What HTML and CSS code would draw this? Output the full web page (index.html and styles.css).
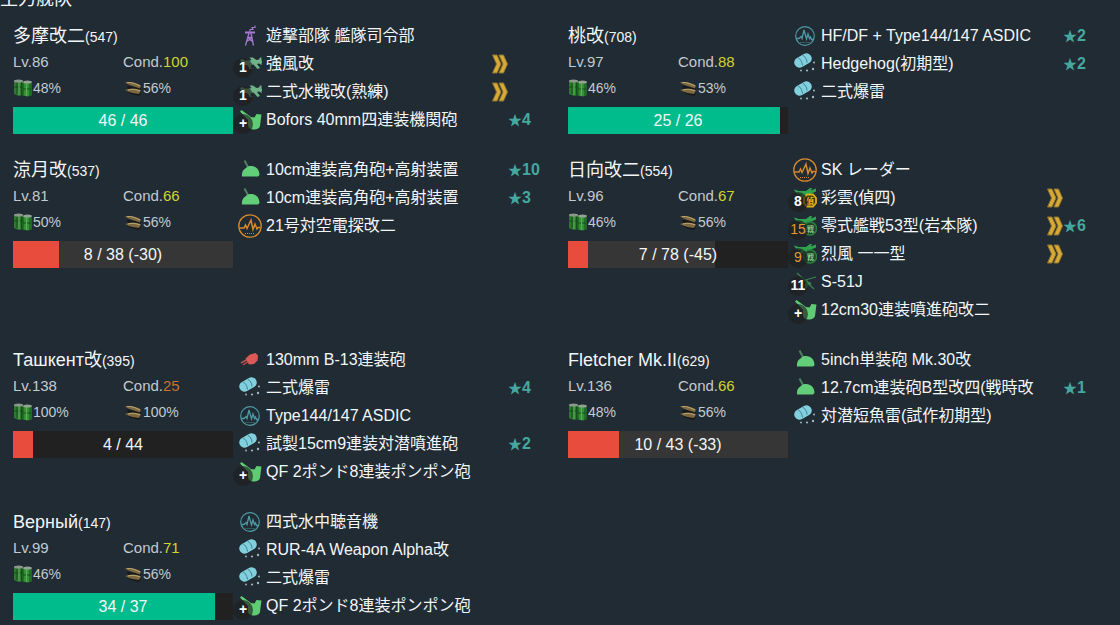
FILE: index.html
```
<!DOCTYPE html>
<html lang="ja">
  <head>
    <meta charset="utf-8" />
    <title>主力舰队</title>
    <meta name="viewport" content="width=device-width,initial-scale=1" />
    <link rel="stylesheet" href="styles.css">
  </head>

  <body>
    <!-- Icon sprite -->
    <svg class="sprite" aria-hidden="true">
      <symbol id="command" viewBox="0 0 24 24">
        <g fill="none" stroke="#a678cf" stroke-width="1.3">
          <path d="M11 9 7.500 21.500M13 9 15.500 21.500M8.500 17.500l6-3.500M9.500 13.500l5.500 4.500M9.500 13.500h4.500"/>
          <path d="M7 8.500h10" stroke-width="2"/>
          <path d="M12 9V5.500l3 0 -1-2 3 0 0-2" stroke-width="1.100"/>
        </g>
      </symbol>
      <symbol id="seaplane" viewBox="0 0 24 24">
        <path fill="#6fb287" d="M2 8l2.500-1 2 1.500 5.500 0 1.500-.5-2-2.500 3.500 0 3.500 2.500 2.500-.5 1-2 1.500 0 0 3 1.500 1.500-1.500 1 .5 2-3-1.500-2 .5 3 4-2.500 1-4-4.500-2 .5-1 2.500 2.500 1-3.500 .5-1.500-3.500-5.500-1z"/>
      </symbol>
      <symbol id="aagun" viewBox="0 0 24 24">
        <path fill="#5fcb74" d="M2 3.500l1.500-1.500L13 9l3.500 .5 2-3.500 5 .5-.5 3.500-1 8c-.5 2-3 3.500-5.500 3.500-4 0-6.500-1.500-6.500-4.500v-5z"/>
      </symbol>
      <symbol id="depth" viewBox="0 0 24 24">
        <path stroke="#82d0de" stroke-width="10.500" stroke-linecap="round" d="M6.500 10.500 13.500 6.500"/>
        <path fill="none" stroke="#35798a" stroke-width=".9" d="M9.500 3c2.500 1.500 4.500 4 4.500 7.500M4 5.500c2.500 .5 5 3.500 5.500 8"/>
        <g fill="#9fb9c0">
          <circle cx="21" cy="10.500" r="1"/>
          <circle cx="20" cy="17" r="1.200"/>
          <circle cx="14" cy="18.500" r="1.100"/>
          <circle cx="8" cy="18.500" r=".9"/>
        </g>
      </symbol>
      <symbol id="sonar" viewBox="0 0 24 24">
        <g fill="none" stroke="#4e9aa4">
          <circle cx="12" cy="12" r="9.300" stroke-width="1.200"/>
          <path stroke-width="1.300" d="M3.500 14.500H6l2-2 1 2 2-8.500 2.500 9 1.500-5 1.500 4.500 1-1.500 1 2.500h2"/>
          <path stroke-width=".8" stroke-dasharray="1 1" d="M7.500 18.500h9"/>
        </g>
      </symbol>
      <symbol id="radar" viewBox="0 0 24 24">
        <g fill="none" stroke="#d58a2c">
          <circle cx="12" cy="12" r="11.200" stroke-width="1.300"/>
          <path stroke-width="1.500" d="M1.500 14H6l1.500-3L9 14.500l4-8.500 2 9.500 2-5.500 2 5 1-1.500h2.500"/>
          <path stroke-width="1" stroke-dasharray="1 1" d="M7 19.500h10"/>
        </g>
      </symbol>
      <symbol id="highangle" viewBox="0 0 24 24">
        <path stroke="#4c8060" stroke-width="2" d="M6.500 2.500 10.500 10"/>
        <path fill="#63ce79" d="M4 18.500c-.5-4 1-7 4-8.500 1-1.500 3-2 5-2 5 0 8.500 3.500 8.500 9l-1.500 1.500z"/>
      </symbol>
      <symbol id="maingun" viewBox="0 0 24 24">
        <path stroke="#b9524f" stroke-width="1.500" d="M3 15l7-4M5 17l6-4"/>
        <path fill="#db5a57" d="M7.500 10.500 12 6.500l5.500-1.500 2.500 2.500-.5 5-3.500 3.500-5 .5z"/>
      </symbol>
      <symbol id="plane" viewBox="0 0 24 24">
        <path fill="#2fa350" d="M1 3.500l5 1.500 7 0 4-3 2 0-1 2.500 5-2 0 3-8 3.500-3 0-3 2.500-2 0 1-3-5-1.500z"/>
      </symbol>
      <symbol id="recon" viewBox="0 0 24 24">
        <use href="#plane"/>
        <path fill="#3b3510" stroke="#e0ae17" stroke-width="1.800" d="M14 8.500h6l3 3.500v5l-3 3.500h-6L11 17v-5z"/>
        <text class="glyph" x="17" y="17.500" fill="#f0bd20">偵</text>
      </symbol>
      <symbol id="fighter" viewBox="0 0 24 24">
        <use href="#plane"/>
        <circle cx="17" cy="14.500" r="6.500" fill="#1d4229" stroke="#28803f" stroke-width="1.500"/>
        <text class="glyph" x="17" y="17.500" fill="#7fc48f">戦</text>
      </symbol>
      <symbol id="heli" viewBox="0 0 24 24">
        <g fill="none" stroke="#3c8350">
          <path stroke-width="1.200" d="M4 3 21 19M9 11 23 7"/>
          <path stroke-width="2.500" d="M12 10l3 3 3 1M14 12l-1 6"/>
        </g>
      </symbol>
      <symbol id="chevron" viewBox="0 0 16 20">
        <path fill="#d8aa35" stroke="#8d742f" stroke-width="1" d="M.5 1h4.500l4 9-4 9H.5l4-9zM7 1h4.500l4 9-4 9H7l4-9z"/>
      </symbol>
      <symbol id="fuel" viewBox="0 0 20 20">
        <path fill="#2b7a2d" d="M1 3h9v14l-4 1-5-2z"/>
        <path fill="#2f9131" d="M10 4h8.500v13.500l-4 1-4.500-1z"/>
        <path stroke="#135019" stroke-width="1" d="M4 4v12M8.500 4v13M10 5v12M17 5v13M1 9h9M10 11h8"/>
        <path stroke="#62a860" stroke-width="1.200" d="M6 4v13M13.500 5v13"/>
        <ellipse cx="5.500" cy="3" rx="4.500" ry="1.500" fill="#8a998b"/>
        <ellipse cx="14.500" cy="4" rx="4.300" ry="1.500" fill="#94a395"/>
      </symbol>
      <symbol id="ammo" viewBox="0 0 20 20">
        <path fill="#15191a" d="M4 8l14 1v3L6 13zM4 13l14 2-2 3-8-2z"/>
        <path fill="#7d6840" d="M1.500 4.500C7 3 13 4.500 18 7.500l-1 3C12 8.500 7 7.500 1.500 4.500zM2 12c5-2 11-1.500 16 0l-2 4c-4-.5-9-1-14-4z"/>
        <path fill="none" stroke="#bda873" stroke-width="1" d="M4 4.500c5-.5 9 1.500 13 3.500M5 12c5-1.500 8-.5 12 1"/>
      </symbol>
    </svg>

    <header class="fleet-title">主力舰队</header>

    <main class="fleet">
      <section class="ship">
        <div class="info">
          <div class="name">多摩改二<small>(547)</small></div>
          <div class="stats"><span>Lv.86</span><span>Cond.<b class="cond">100</b></span></div>
          <div class="supply">
            <span><svg><use href="#fuel"/></svg>48%</span>
            <span><svg><use href="#ammo"/></svg>56%</span>
          </div>
          <div class="hp"><div class="hp-now" style="width: 100%"></div><span>46 / 46</span></div>
        </div>
        <ul class="items">
          <li><span class="icon"><svg><use href="#command"/></svg></span><span class="item-name">遊撃部隊 艦隊司令部</span></li>
          <li><span class="icon"><svg><use href="#seaplane"/></svg><i>1</i></span><span class="item-name">強風改</span><svg class="rank"><use href="#chevron"/></svg><span class="level"></span></li>
          <li><span class="icon"><svg><use href="#seaplane"/></svg><i>1</i></span><span class="item-name">二式水戦改(熟練)</span><svg class="rank"><use href="#chevron"/></svg><span class="level"></span></li>
          <li><span class="icon"><svg><use href="#aagun"/></svg><i>+</i></span><span class="item-name">Bofors 40mm四連装機関砲</span><span class="level"><i>★</i>4</span></li>
        </ul>
      </section>

      <section class="ship">
        <div class="info">
          <div class="name">桃改<small>(708)</small></div>
          <div class="stats"><span>Lv.97</span><span>Cond.<b class="cond">88</b></span></div>
          <div class="supply">
            <span><svg><use href="#fuel"/></svg>46%</span>
            <span><svg><use href="#ammo"/></svg>53%</span>
          </div>
          <div class="hp"><div class="hp-now" style="width: 96.15%"></div><span>25 / 26</span></div>
        </div>
        <ul class="items">
          <li><span class="icon"><svg><use href="#sonar"/></svg></span><span class="item-name">HF/DF + Type144/147 ASDIC</span><span class="level"><i>★</i>2</span></li>
          <li><span class="icon"><svg><use href="#depth"/></svg></span><span class="item-name">Hedgehog(初期型)</span><span class="level"><i>★</i>2</span></li>
          <li><span class="icon"><svg><use href="#depth"/></svg></span><span class="item-name">二式爆雷</span></li>
        </ul>
      </section>

      <section class="ship">
        <div class="info">
          <div class="name">涼月改<small>(537)</small></div>
          <div class="stats"><span>Lv.81</span><span>Cond.<b class="cond">66</b></span></div>
          <div class="supply">
            <span><svg><use href="#fuel"/></svg>50%</span>
            <span><svg><use href="#ammo"/></svg>56%</span>
          </div>
          <div class="hp"><div class="hp-lost" style="width: 100%"></div><div class="hp-now danger" style="width: 21.05%"></div><span>8 / 38 (-30)</span></div>
        </div>
        <ul class="items">
          <li><span class="icon"><svg><use href="#highangle"/></svg></span><span class="item-name">10cm連装高角砲+高射装置</span><span class="level"><i>★</i>10</span></li>
          <li><span class="icon"><svg><use href="#highangle"/></svg></span><span class="item-name">10cm連装高角砲+高射装置</span><span class="level"><i>★</i>3</span></li>
          <li><span class="icon"><svg><use href="#radar"/></svg></span><span class="item-name">21号対空電探改二</span></li>
        </ul>
      </section>

      <section class="ship">
        <div class="info">
          <div class="name">日向改二<small>(554)</small></div>
          <div class="stats"><span>Lv.96</span><span>Cond.<b class="cond">67</b></span></div>
          <div class="supply">
            <span><svg><use href="#fuel"/></svg>46%</span>
            <span><svg><use href="#ammo"/></svg>56%</span>
          </div>
          <div class="hp"><div class="hp-lost" style="width: 66.67%"></div><div class="hp-now danger" style="width: 8.97%"></div><span>7 / 78 (-45)</span></div>
        </div>
        <ul class="items">
          <li><span class="icon"><svg><use href="#radar"/></svg></span><span class="item-name">SK レーダー</span></li>
          <li><span class="icon"><svg><use href="#recon"/></svg><i>8</i></span><span class="item-name">彩雲(偵四)</span><svg class="rank"><use href="#chevron"/></svg><span class="level"></span></li>
          <li><span class="icon"><svg><use href="#fighter"/></svg><i class="low">15</i></span><span class="item-name">零式艦戦53型(岩本隊)</span><svg class="rank"><use href="#chevron"/></svg><span class="level"><i>★</i>6</span></li>
          <li><span class="icon"><svg><use href="#fighter"/></svg><i class="low">9</i></span><span class="item-name">烈風 一一型</span><svg class="rank"><use href="#chevron"/></svg><span class="level"></span></li>
          <li><span class="icon"><svg><use href="#heli"/></svg><i>11</i></span><span class="item-name">S-51J</span></li>
          <li><span class="icon"><svg><use href="#aagun"/></svg><i>+</i></span><span class="item-name">12cm30連装噴進砲改二</span></li>
        </ul>
      </section>

      <section class="ship">
        <div class="info">
          <div class="name">Ташкент改<small>(395)</small></div>
          <div class="stats"><span>Lv.138</span><span>Cond.<b class="cond tired">25</b></span></div>
          <div class="supply">
            <span><svg><use href="#fuel"/></svg>100%</span>
            <span><svg><use href="#ammo"/></svg>100%</span>
          </div>
          <div class="hp"><div class="hp-now danger" style="width: 9.09%"></div><span>4 / 44</span></div>
        </div>
        <ul class="items">
          <li><span class="icon"><svg><use href="#maingun"/></svg></span><span class="item-name">130mm B-13連装砲</span></li>
          <li><span class="icon"><svg><use href="#depth"/></svg></span><span class="item-name">二式爆雷</span><span class="level"><i>★</i>4</span></li>
          <li><span class="icon"><svg><use href="#sonar"/></svg></span><span class="item-name">Type144/147 ASDIC</span></li>
          <li><span class="icon"><svg><use href="#depth"/></svg></span><span class="item-name">試製15cm9連装対潜噴進砲</span><span class="level"><i>★</i>2</span></li>
          <li><span class="icon"><svg><use href="#aagun"/></svg><i>+</i></span><span class="item-name">QF 2ポンド8連装ポンポン砲</span></li>
        </ul>
      </section>

      <section class="ship">
        <div class="info">
          <div class="name">Fletcher Mk.II<small>(629)</small></div>
          <div class="stats"><span>Lv.136</span><span>Cond.<b class="cond">66</b></span></div>
          <div class="supply">
            <span><svg><use href="#fuel"/></svg>48%</span>
            <span><svg><use href="#ammo"/></svg>56%</span>
          </div>
          <div class="hp"><div class="hp-lost" style="width: 100%"></div><div class="hp-now danger" style="width: 23.26%"></div><span>10 / 43 (-33)</span></div>
        </div>
        <ul class="items">
          <li><span class="icon"><svg><use href="#highangle"/></svg></span><span class="item-name">5inch単装砲 Mk.30改</span></li>
          <li><span class="icon"><svg><use href="#highangle"/></svg></span><span class="item-name">12.7cm連装砲B型改四(戦時改</span><span class="level"><i>★</i>1</span></li>
          <li><span class="icon"><svg><use href="#depth"/></svg></span><span class="item-name">対潜短魚雷(試作初期型)</span></li>
        </ul>
      </section>

      <section class="ship">
        <div class="info">
          <div class="name">Верный<small>(147)</small></div>
          <div class="stats"><span>Lv.99</span><span>Cond.<b class="cond">71</b></span></div>
          <div class="supply">
            <span><svg><use href="#fuel"/></svg>46%</span>
            <span><svg><use href="#ammo"/></svg>56%</span>
          </div>
          <div class="hp"><div class="hp-now" style="width: 91.89%"></div><span>34 / 37</span></div>
        </div>
        <ul class="items">
          <li><span class="icon"><svg><use href="#sonar"/></svg></span><span class="item-name">四式水中聴音機</span></li>
          <li><span class="icon"><svg><use href="#depth"/></svg></span><span class="item-name">RUR-4A Weapon Alpha改</span></li>
          <li><span class="icon"><svg><use href="#depth"/></svg></span><span class="item-name">二式爆雷</span></li>
          <li><span class="icon"><svg><use href="#aagun"/></svg><i>+</i></span><span class="item-name">QF 2ポンド8連装ポンポン砲</span></li>
        </ul>
      </section>
    </main>
  </body>
</html>
```
FILE: styles.css
```
body {
  margin: 0;
  background: #212b33;
  color: #f3f6f8;
  font-family: 'Liberation Sans', 'Noto Sans CJK JP', sans-serif;
  font-size: 16px;
}

.sprite {
  display: none;
}

.glyph {
  font-size: 8px;
  font-weight: bold;
  text-anchor: middle;
}

/* the heading is partly scrolled out of view */
.fleet-title {
  margin-top: -13px;
  font-family: 'Liberation Sans', 'Noto Sans CJK SC', sans-serif;
  font-size: 18px;
  line-height: 24px;
}

.fleet {
  display: grid;
  grid-template-columns: 1fr 1fr;
  row-gap: 22px;
  padding: 11px 5px 0;
}

.ship {
  display: flex;
  gap: 5px;
  padding: 0 8px;
}

.info {
  flex: 0 0 220px;
}

.name {
  font-size: 18px;
  line-height: 28px;
  white-space: nowrap;
}

.name small {
  font-size: 14px;
}

.stats,
.supply {
  display: grid;
  grid-template-columns: 1fr 1fr;
  color: #c3cad0;
}

.stats {
  font-size: 15px;
  line-height: 22px;
}

.supply {
  font-size: 14px;
  line-height: 30px;
  margin-bottom: 4px;
}

.supply span {
  display: flex;
  align-items: center;
}

.supply svg {
  width: 20px;
  height: 20px;
}

.cond {
  color: #cdd62f;
  font-weight: normal;
}

.cond.tired {
  color: #c8742e;
}

.hp {
  display: grid;
  background: #212121;
  line-height: 27px;
}

.hp > * {
  grid-area: 1 / 1;
}

.hp span {
  text-align: center;
}

.hp-lost {
  background: #363636;
}

.hp-now {
  background: #00bc8c;
}

.hp-now.danger {
  background: #e74c3c;
}

.items {
  flex: 1;
  min-width: 0;
  margin: 0;
  padding: 0;
  list-style: none;
}

.items li {
  display: flex;
  align-items: center;
  height: 28px;
}

.icon {
  position: relative;
  width: 24px;
  height: 24px;
  margin-right: 4px;
}

.icon svg {
  display: block;
  width: 24px;
  height: 24px;
}

/* aircraft count or extra slot mark */
.icon i {
  position: absolute;
  left: -5px;
  bottom: -2px;
  width: 20px;
  height: 20px;
  border-radius: 50%;
  background: rgba(30, 30, 30, 0.65);
  color: #fff;
  font-size: 14px;
  font-style: normal;
  font-weight: bold;
  line-height: 18px;
  text-align: center;
}

.icon i.low {
  color: #e29a35;
  font-weight: normal;
}

.item-name {
  flex: 1;
  line-height: 28px;
  white-space: nowrap;
}

.rank {
  width: 16px;
  height: 20px;
}

.level {
  display: flex;
  align-items: center;
  width: 44px;
  color: #45a8a0;
  font-weight: bold;
  line-height: 20px;
}

.level i {
  font-size: 14px;
  font-style: normal;
}
```
